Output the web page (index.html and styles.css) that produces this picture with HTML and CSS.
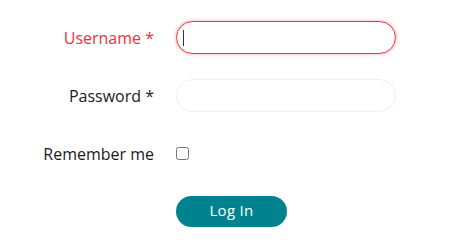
FILE: index.html
```html
<!DOCTYPE html>
<html>
<head>
<meta charset="utf-8">
<link rel="stylesheet" href="styles.css">
</head>
<body>
<form class="login">
  <div class="row">
    <label class="label label-error" for="u">Username *</label>
    <div class="field"><input id="u" class="input input-focus" type="text"><span class="caret"></span></div>
  </div>
  <div class="row">
    <label class="label" for="p">Password *</label>
    <div class="field"><input id="p" class="input" type="password"></div>
  </div>
  <div class="row">
    <label class="label" for="r">Remember me</label>
    <div class="field"><input id="r" class="check" type="checkbox"></div>
  </div>
  <div class="row">
    <span class="label"></span>
    <div class="field"><button type="button" class="btn">Log In</button></div>
  </div>
</form>
</body>
</html>
```
FILE: styles.css
```css
html, body {
  margin: 0;
  padding: 0;
  background: #fff;
}
body {
  font-family: "Open Sans", "Noto Sans", sans-serif;
  font-size: 16px;
  color: #1a1a1a;
}
.login {
  display: flex;
  flex-direction: column;
  gap: 25px;
  padding-top: 21px;
}
.row {
  display: flex;
  align-items: center;
  height: 33px;
  gap: 22px;
}
.label {
  width: 154px;
  text-align: right;
  line-height: 22px;
}
.label-error {
  color: #f5303d;
}
.field {
  position: relative;
  display: flex;
  align-items: center;
  width: 220px;
}
.input {
  box-sizing: border-box;
  width: 220px;
  height: 33px;
  margin: 0;
  border: 1px solid #efefef;
  border-radius: 17px;
  background: #fff;
  outline: none;
  padding: 0 12px;
}
.input-focus {
  border-color: #f0323c;
  box-shadow: 0 0 3px 1px rgba(245, 48, 61, 0.25);
}
.caret {
  position: absolute;
  left: 7px;
  top: 9px;
  width: 1px;
  height: 16px;
  background: #333;
}
.check {
  width: 13px;
  height: 13px;
  margin: 0;
}
.btn {
  width: 111px;
  height: 31px;
  border: none;
  border-radius: 16px;
  background: #00838f;
  color: #fff;
  font-family: "Open Sans", "Noto Sans", sans-serif;
  font-size: 15px;
  line-height: 29px;
  padding: 0 0 2px;
  letter-spacing: 0.3px;
}
```
